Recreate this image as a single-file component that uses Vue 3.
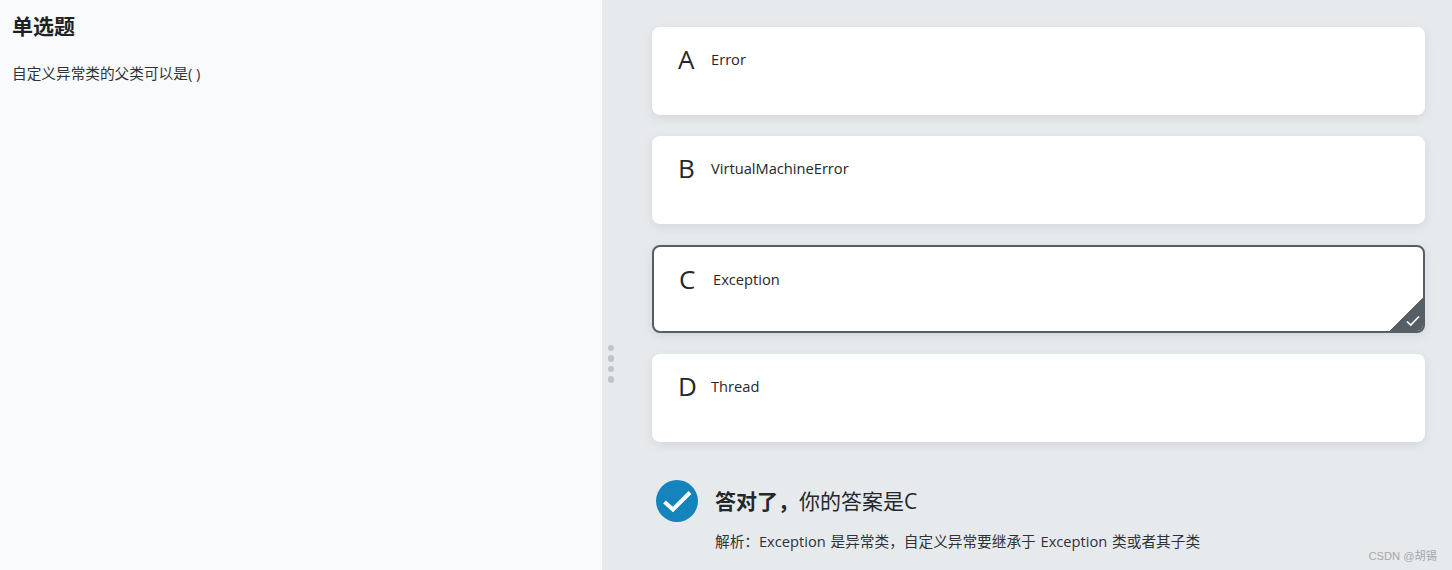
<script setup>
const options = [
  { key: 'A', text: 'Error' },
  { key: 'B', text: 'VirtualMachineError' },
  { key: 'C', text: 'Exception', selected: true },
  { key: 'D', text: 'Thread' }
]
</script>

<template>
  <div class="page">
    <section class="question">
      <h2 class="type">单选题</h2>
      <p class="stem">自定义异常类的父类可以是( )</p>
    </section>

    <section class="answers">
      <div class="handle">
        <i></i><i></i><i></i><i></i>
      </div>

      <div class="options">
        <div
          v-for="o in options"
          :key="o.key"
          class="option"
          :class="{ selected: o.selected }"
        >
          <span class="letter">{{ o.key }}</span>
          <span class="label">{{ o.text }}</span>
          <span v-if="o.selected" class="corner">
            <svg width="14" height="12" viewBox="0 0 14 12">
              <path d="M1 6.5l3.8 3.6L13 1.5" fill="none" stroke="#fff" stroke-width="1.7" />
            </svg>
          </span>
        </div>
      </div>

      <div class="result">
        <svg class="ok" width="42" height="42" viewBox="0 0 42 42">
          <circle cx="21" cy="21" r="21" fill="#1583bc" />
          <path d="M8.5 22l8.5 7.5L34 12.5" fill="none" stroke="#fff" stroke-width="4" />
        </svg>
        <div class="result-text">
          <div class="verdict"><b>答对了，</b>你的答案是C</div>
          <div class="analysis">解析：Exception 是异常类，自定义异常要继承于 Exception 类或者其子类</div>
        </div>
      </div>

      <span class="watermark">CSDN @胡锡</span>
    </section>
  </div>
</template>

<style>
html,
body {
  margin: 0;
  overflow: hidden;
}
</style>

<style scoped>
.page {
  display: flex;
  width: 1452px;
  height: 570px;
  overflow: hidden;
  font-family: "Open Sans", "Noto Sans CJK SC", sans-serif;
  color: #24272b;
}

.question {
  width: 602px;
  flex: none;
  box-sizing: border-box;
  padding: 13px 12px;
  background: #f9fafc;
}

.type {
  margin: 0;
  font-size: 21px;
  line-height: 27px;
  font-weight: 700;
  color: #1f2124;
}

.stem {
  margin: 20px 0 0;
  font-size: 14.67px;
  line-height: 26px;
  color: #2f3338;
}

.answers {
  position: relative;
  flex: 1;
  box-sizing: border-box;
  padding: 27px 27px 0 50px;
  background: #e7eaed;
}

.handle {
  position: absolute;
  left: 6px;
  top: 345px;
  display: flex;
  flex-direction: column;
  gap: 4px;
}

.handle i {
  display: block;
  width: 6.4px;
  height: 6.4px;
  border-radius: 50%;
  background: #c2c5c8;
}

.options {
  display: flex;
  flex-direction: column;
  gap: 21px;
}

.option {
  position: relative;
  display: flex;
  align-items: flex-start;
  box-sizing: border-box;
  height: 88px;
  padding: 17px 25px 17px 26px;
  background: #fff;
  border-radius: 8px;
  box-shadow: 0 3px 10px rgba(90, 100, 110, 0.14);
  overflow: hidden;
}

.option.selected {
  height: 87.5px;
  padding: 17px 25px;
  border: 2px solid #565e66;
}

.letter {
  width: 33px;
  flex: none;
  font-size: 26px;
  line-height: 30px;
}

.selected .letter {
  width: 34px;
}

.label {
  font-size: 14.67px;
  line-height: 30px;
}

.corner {
  position: absolute;
  right: 0;
  bottom: 0;
  width: 34px;
  height: 34px;
  background: linear-gradient(135deg, transparent 50%, #565e66 50%);
}

.corner svg {
  position: absolute;
  right: 3px;
  bottom: 4px;
}

.result {
  display: flex;
  align-items: flex-start;
  gap: 17px;
  margin: 38.5px 0 0 4px;
}

.ok {
  flex: none;
}

.result-text {
  padding-top: 6px;
}

.verdict {
  font-size: 21px;
  line-height: 30px;
  color: #24272b;
}

.verdict b {
  font-weight: 700;
}

.analysis {
  margin-top: 14px;
  font-size: 14.67px;
  line-height: 22px;
  word-spacing: 1px;
  color: #2f3338;
}

.watermark {
  position: absolute;
  right: 15px;
  bottom: 7px;
  font-family: "Liberation Sans", "Noto Sans CJK SC", sans-serif;
  font-size: 11.2px;
  color: #a4a8ac;
}
</style>
